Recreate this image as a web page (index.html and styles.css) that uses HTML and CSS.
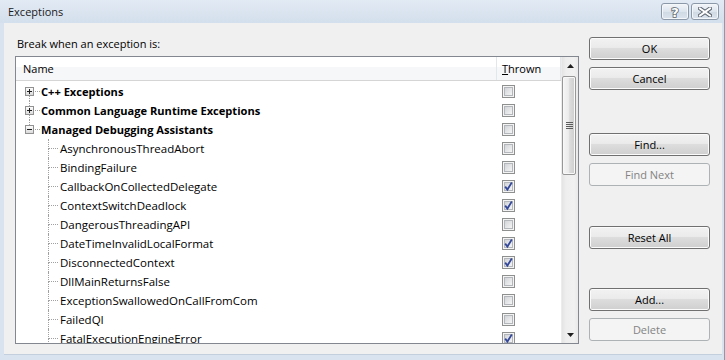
FILE: index.html
```html
<!doctype html>
<html>
    <head>
        <meta charset="utf-8" />
        <title>Exceptions</title>
        <link rel="stylesheet" href="styles.css">
    </head>
    <body>
        <svg class="defs" width="0" height="0">
            <defs>
                <linearGradient id="cb-fill" x1="0" y1="0" x2="1" y2="1">
                    <stop offset="0" stop-color="#cfd2d6" />
                    <stop offset="1" stop-color="#f7f7f7" />
                </linearGradient>
                <linearGradient id="box-fill" x1="0" y1="0" x2="0" y2="1">
                    <stop offset="0" stop-color="#ffffff" />
                    <stop offset="1" stop-color="#d8d8d8" />
                </linearGradient>
                <symbol id="cb-off" viewBox="0 0 13 13">
                    <rect x="0.5" y="0.5" width="12" height="12" fill="#f4f4f4" stroke="#8e8f8f" />
                    <rect x="2.5" y="2.5" width="8" height="8" fill="url(#cb-fill)" stroke="#b3b6ba" />
                </symbol>
                <symbol id="cb-on" viewBox="0 0 13 13">
                    <rect x="0.5" y="0.5" width="12" height="12" fill="#f4f4f4" stroke="#8e8f8f" />
                    <rect x="2.5" y="2.5" width="8" height="8" fill="url(#cb-fill)" stroke="#b3b6ba" />
                    <path d="M3.2 6.6 L5.4 9.6 L9.8 2.6" fill="none" stroke="#33489a" stroke-width="1.8" />
                </symbol>
                <symbol id="plus" viewBox="0 0 9 9">
                    <rect x="0.5" y="0.5" width="8" height="8" fill="url(#box-fill)" stroke="#919191" />
                    <path d="M2 4.5 H7 M4.5 2 V7" stroke="#1e1e1e" />
                </symbol>
                <symbol id="minus" viewBox="0 0 9 9">
                    <rect x="0.5" y="0.5" width="8" height="8" fill="url(#box-fill)" stroke="#919191" />
                    <path d="M2 4.5 H7" stroke="#1e1e1e" />
                </symbol>
            </defs>
        </svg>
        <div class="window">
            <div class="titlebar">
                <span class="title">Exceptions</span>
                <div class="caption-buttons">
                    <span class="cap-btn">
                        <svg width="14" height="13" viewBox="0 0 14 13">
                            <text x="7" y="11.5" text-anchor="middle" class="help-glyph">?</text>
                        </svg>
                    </span>
                    <span class="cap-btn">
                        <svg width="14" height="10" viewBox="0 0 14 10">
                            <path d="M2 1.5 L12 8.5 M12 1.5 L2 8.5" stroke="#5d6670" stroke-width="4" stroke-linecap="square" />
                            <path d="M2 1.5 L12 8.5 M12 1.5 L2 8.5" stroke="#ffffff" stroke-width="2" stroke-linecap="square" />
                        </svg>
                    </span>
                </div>
            </div>
            <div class="client">
                <div class="left">
                    <div class="prompt">Break when an exception is:</div>
                    <div class="listbox">
                        <div class="list-main">
                            <div class="header">
                                <div class="col-name">Name</div>
                                <div class="col-thrown"><u>T</u>hrown</div>
                            </div>
                            <div class="rows">
                                <div class="row">
                                    <div class="name">
                                        <span class="node">
                                            <i class="stem off"></i>
                                            <span class="node-mid"><svg class="expander"><use href="#plus" /></svg><i class="stem-right"></i></span>
                                            <i class="stem"></i>
                                        </span>
                                        <span class="label bold">C++ Exceptions</span>
                                    </div>
                                    <div class="thrown"><svg class="cb"><use href="#cb-off" /></svg></div>
                                </div>
                                <div class="row">
                                    <div class="name">
                                        <span class="node">
                                            <i class="stem"></i>
                                            <span class="node-mid"><svg class="expander"><use href="#plus" /></svg><i class="stem-right"></i></span>
                                            <i class="stem"></i>
                                        </span>
                                        <span class="label bold">Common Language Runtime Exceptions</span>
                                    </div>
                                    <div class="thrown"><svg class="cb"><use href="#cb-off" /></svg></div>
                                </div>
                                <div class="row">
                                    <div class="name">
                                        <span class="node">
                                            <i class="stem"></i>
                                            <span class="node-mid"><svg class="expander"><use href="#minus" /></svg><i class="stem-right"></i></span>
                                            <i class="stem off"></i>
                                        </span>
                                        <span class="label bold">Managed Debugging Assistants</span>
                                    </div>
                                    <div class="thrown"><svg class="cb"><use href="#cb-off" /></svg></div>
                                </div>
                                <div class="row">
                                    <div class="name">
                                        <span class="blank"></span>
                                        <span class="twig"><i class="twig-top"></i><i class="twig-bottom"></i></span>
                                        <span class="label">AsynchronousThreadAbort</span>
                                    </div>
                                    <div class="thrown"><svg class="cb"><use href="#cb-off" /></svg></div>
                                </div>
                                <div class="row">
                                    <div class="name">
                                        <span class="blank"></span>
                                        <span class="twig"><i class="twig-top"></i><i class="twig-bottom"></i></span>
                                        <span class="label">BindingFailure</span>
                                    </div>
                                    <div class="thrown"><svg class="cb"><use href="#cb-off" /></svg></div>
                                </div>
                                <div class="row">
                                    <div class="name">
                                        <span class="blank"></span>
                                        <span class="twig"><i class="twig-top"></i><i class="twig-bottom"></i></span>
                                        <span class="label">CallbackOnCollectedDelegate</span>
                                    </div>
                                    <div class="thrown"><svg class="cb"><use href="#cb-on" /></svg></div>
                                </div>
                                <div class="row">
                                    <div class="name">
                                        <span class="blank"></span>
                                        <span class="twig"><i class="twig-top"></i><i class="twig-bottom"></i></span>
                                        <span class="label">ContextSwitchDeadlock</span>
                                    </div>
                                    <div class="thrown"><svg class="cb"><use href="#cb-on" /></svg></div>
                                </div>
                                <div class="row">
                                    <div class="name">
                                        <span class="blank"></span>
                                        <span class="twig"><i class="twig-top"></i><i class="twig-bottom"></i></span>
                                        <span class="label">DangerousThreadingAPI</span>
                                    </div>
                                    <div class="thrown"><svg class="cb"><use href="#cb-off" /></svg></div>
                                </div>
                                <div class="row">
                                    <div class="name">
                                        <span class="blank"></span>
                                        <span class="twig"><i class="twig-top"></i><i class="twig-bottom"></i></span>
                                        <span class="label">DateTimeInvalidLocalFormat</span>
                                    </div>
                                    <div class="thrown"><svg class="cb"><use href="#cb-on" /></svg></div>
                                </div>
                                <div class="row">
                                    <div class="name">
                                        <span class="blank"></span>
                                        <span class="twig"><i class="twig-top"></i><i class="twig-bottom"></i></span>
                                        <span class="label">DisconnectedContext</span>
                                    </div>
                                    <div class="thrown"><svg class="cb"><use href="#cb-on" /></svg></div>
                                </div>
                                <div class="row">
                                    <div class="name">
                                        <span class="blank"></span>
                                        <span class="twig"><i class="twig-top"></i><i class="twig-bottom"></i></span>
                                        <span class="label">DllMainReturnsFalse</span>
                                    </div>
                                    <div class="thrown"><svg class="cb"><use href="#cb-off" /></svg></div>
                                </div>
                                <div class="row">
                                    <div class="name">
                                        <span class="blank"></span>
                                        <span class="twig"><i class="twig-top"></i><i class="twig-bottom"></i></span>
                                        <span class="label">ExceptionSwallowedOnCallFromCom</span>
                                    </div>
                                    <div class="thrown"><svg class="cb"><use href="#cb-off" /></svg></div>
                                </div>
                                <div class="row">
                                    <div class="name">
                                        <span class="blank"></span>
                                        <span class="twig"><i class="twig-top"></i><i class="twig-bottom"></i></span>
                                        <span class="label">FailedQI</span>
                                    </div>
                                    <div class="thrown"><svg class="cb"><use href="#cb-off" /></svg></div>
                                </div>
                                <div class="row">
                                    <div class="name">
                                        <span class="blank"></span>
                                        <span class="twig"><i class="twig-top"></i><i class="twig-bottom"></i></span>
                                        <span class="label">FatalExecutionEngineError</span>
                                    </div>
                                    <div class="thrown"><svg class="cb"><use href="#cb-on" /></svg></div>
                                </div>
                            </div>
                        </div>
                        <div class="scrollbar">
                            <div class="sb-btn">
                                <svg width="7" height="4" viewBox="0 0 7 4"><path d="M0 4 L3.5 0 L7 4 Z" fill="#1f1f1f" /></svg>
                            </div>
                            <div class="sb-track">
                                <div class="sb-thumb">
                                    <svg width="7" height="8" viewBox="0 0 7 8"><path d="M0 0.5 H7 M0 2.5 H7 M0 4.5 H7 M0 6.5 H7" stroke="#5c5c5c" /></svg>
                                </div>
                            </div>
                            <div class="sb-btn">
                                <svg width="7" height="4" viewBox="0 0 7 4"><path d="M0 0 L3.5 4 L7 0 Z" fill="#1f1f1f" /></svg>
                            </div>
                        </div>
                    </div>
                </div>
                <div class="buttons">
                    <button class="btn">OK</button>
                    <button class="btn">Cancel</button>
                    <button class="btn find-group">Find...</button>
                    <button class="btn" disabled>Find Next</button>
                    <button class="btn reset-group">Reset All</button>
                    <button class="btn edit-group">Add...</button>
                    <button class="btn" disabled>Delete</button>
                </div>
            </div>
        </div>
    </body>
</html>
```
FILE: styles.css
```css
body {
    margin: 0;
    font-family: "Open Sans", "Liberation Sans", sans-serif;
    font-size: 11px;
    color: #000;
}
.defs {
    position: absolute;
}
.window {
    width: 725px;
    height: 360px;
    display: flex;
    flex-direction: column;
    background: #d9e3ef;
    border-right: 1px solid #8a99ab;
    box-sizing: border-box;
}
.titlebar {
    height: 23px;
    display: flex;
    padding: 0 5px 0 8px;
    background: linear-gradient(#e2eaf4, #d3dfec);
}
.title {
    line-height: 24px;
    color: #1a1a1a;
}
.caption-buttons {
    margin-left: auto;
    display: flex;
    gap: 2px;
    padding-top: 3px;
}
.cap-btn {
    width: 28px;
    height: 17px;
    box-sizing: border-box;
    border: 1px solid #8b98a8;
    border-radius: 3px;
    background: linear-gradient(#f3f6fa, #dce4ed 50%, #cfd9e4 51%, #dbe4ee);
    box-shadow: inset 0 0 0 1px #f4f7fa;
    display: flex;
    align-items: center;
    justify-content: center;
}
.help-glyph {
    font-family: "DejaVu Sans", sans-serif;
    font-size: 13px;
    font-weight: bold;
    fill: #ffffff;
    stroke: #5d6670;
    stroke-width: 1.6px;
    paint-order: stroke;
}
.client {
    flex: 1;
    display: flex;
    margin: 0 2px 5px 4px;
    background: #f0f0f0;
    border-bottom: 1px solid #c3cfdc;
}
.left {
    padding-left: 11px;
}
.prompt {
    height: 33px;
    padding: 13px 0 0 2px;
    line-height: 16px;
    box-sizing: border-box;
}
.listbox {
    width: 564px;
    height: 288px;
    display: flex;
    border: 1px solid #828790;
    box-sizing: border-box;
    background: #fff;
}
.list-main {
    width: 545px;
    overflow: hidden;
}
.header {
    height: 24px;
    display: flex;
    border-bottom: 1px solid #d5d5d5;
    box-sizing: border-box;
    background: linear-gradient(#ffffff 0 45%, #f6f7f8 45%);
}
.col-name {
    width: 481px;
    padding-left: 7px;
    border-right: 1px solid #e3e6ea;
    box-sizing: border-box;
    line-height: 23px;
}
.col-thrown {
    width: 64px;
    padding-left: 5px;
    border-right: 1px solid #e3e6ea;
    box-sizing: border-box;
    line-height: 23px;
}
.rows {
    padding-top: 1px;
}
.row {
    display: flex;
    height: 19px;
}
.name {
    width: 481px;
    display: flex;
}
.label {
    font-size: 11.5px;
    line-height: 20px;
    white-space: nowrap;
}
.bold {
    font-size: 11.1px;
    font-weight: bold;
    margin-left: 1px;
}
.node {
    width: 24px;
    display: flex;
    flex-direction: column;
}
.stem {
    height: 5px;
    margin-left: 13px;
    border-left: 1px dotted #a0a0a0;
}
.stem.off {
    border-left-color: transparent;
}
.node-mid {
    height: 9px;
    display: flex;
    align-items: center;
    padding-left: 9px;
}
.expander {
    width: 9px;
    height: 9px;
}
.stem-right {
    width: 5px;
    margin-left: 1px;
    border-top: 1px dotted #a0a0a0;
}
.blank {
    width: 24px;
}
.twig {
    width: 20px;
    display: flex;
    flex-direction: column;
}
.twig-top {
    height: 10px;
    width: 10px;
    margin-left: 8px;
    border-left: 1px dotted #a0a0a0;
    border-bottom: 1px dotted #a0a0a0;
    box-sizing: border-box;
}
.twig-bottom {
    height: 9px;
    margin-left: 8px;
    border-left: 1px dotted #a0a0a0;
}
.thrown {
    padding: 3px 0 0 5px;
}
.cb {
    width: 13px;
    height: 13px;
    display: block;
}
.scrollbar {
    width: 17px;
    display: flex;
    flex-direction: column;
    background: linear-gradient(90deg, #e4e4e4, #eeeeee 25%, #f1f1f1 75%, #e9e9e9);
    border-left: 1px solid #ececec;
    box-sizing: border-box;
}
.sb-btn {
    height: 17px;
    display: flex;
    align-items: center;
    justify-content: center;
}
.sb-track {
    flex: 1;
}
.sb-thumb {
    height: 99px;
    margin: 2px 2px 0 0;
    border: 1px solid #979797;
    border-radius: 2px;
    box-sizing: border-box;
    background: linear-gradient(90deg, #f5f5f5, #ececec 45%, #dcdcdc 55%, #cdcdcd);
    box-shadow: inset 0 0 0 1px #f8f8f8;
    display: flex;
    align-items: center;
    justify-content: center;
}
.buttons {
    display: flex;
    flex-direction: column;
    width: 121px;
    margin-left: 10px;
    padding-top: 14px;
}
.btn {
    height: 23px;
    width: 121px;
    box-sizing: border-box;
    border: 1px solid #707070;
    border-radius: 3px;
    background: linear-gradient(#f2f2f2, #ebebeb 45%, #dddddd 50%, #cfcfcf);
    box-shadow: inset 0 0 0 1px #fbfbfb;
    font: inherit;
    color: #000;
    padding: 0;
}
.btn + .btn {
    margin-top: 7px;
}
.btn:disabled {
    border-color: #adb2b5;
    background: #f4f4f4;
    box-shadow: none;
    color: #838383;
}
.btn.find-group {
    margin-top: 43px;
}
.btn.reset-group {
    margin-top: 40px;
}
.btn.edit-group {
    margin-top: 39px;
}
```
